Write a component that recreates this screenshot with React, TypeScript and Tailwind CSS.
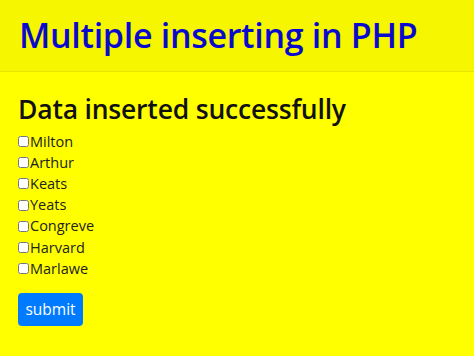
const names = ["Milton", "Arthur", "Keats", "Yeats", "Congreve", "Harvard", "Marlawe"];

export default function App() {
  return (
    <div className="min-h-[356px] bg-[#ffff00] font-['Open_Sans',sans-serif]">
      <div className="h-[72px] bg-[#f6f600] border-b border-[#e6e600] px-[19px] pt-[13px]">
        <h1 className="text-[34px] leading-[44px] font-semibold text-[#0a0acc] tracking-[-0.3px]">
          Multiple inserting in PHP
        </h1>
      </div>
      <div className="px-[18px] pt-[19px]">
        <h2 className="text-[26.5px] leading-[36px] font-semibold text-[#111] tracking-[-0.2px]">
          Data inserted successfully
        </h2>
        <form className="mt-[4px]">
          {names.map((n) => (
            <label key={n} className="flex items-center h-[21.2px] text-[14.5px] text-[#222]">
              <input type="checkbox" className="w-[11px] h-[11px] m-0 mr-[1px]" />
              {n}
            </label>
          ))}
          <button
            type="button"
            className="mt-[14px] h-[33px] w-[65px] rounded-[4px] bg-[#007bff] text-white text-[15.5px]"
          >
            submit
          </button>
        </form>
      </div>
    </div>
  );
}
